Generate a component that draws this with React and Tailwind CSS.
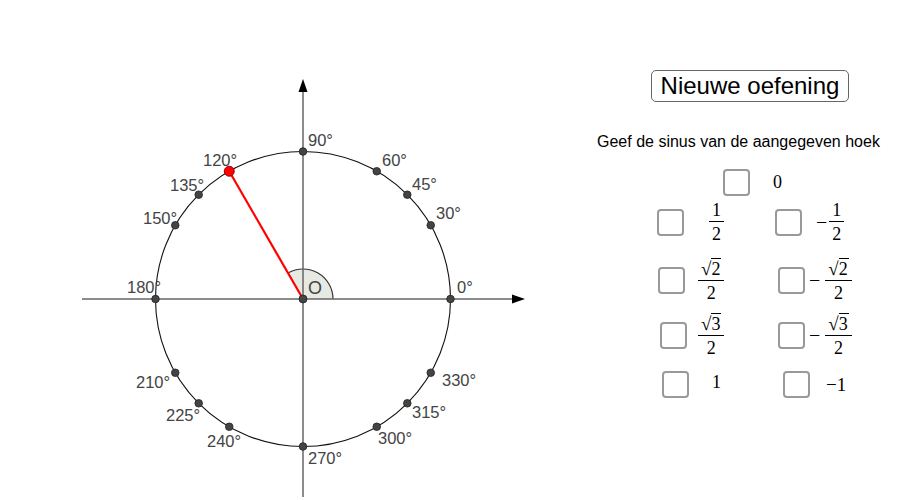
import React from 'react';

const CX = 303;
const CY = 299;
const R = 147.5;

const angles = [0, 30, 45, 60, 90, 135, 150, 180, 210, 225, 240, 270, 300, 315, 330];

const labels = [
  { t: '0°', x: 457, y: 293 },
  { t: '30°', x: 436, y: 219 },
  { t: '45°', x: 412, y: 190 },
  { t: '60°', x: 382, y: 166 },
  { t: '90°', x: 308, y: 146 },
  { t: '120°', x: 203, y: 166 },
  { t: '135°', x: 170, y: 191 },
  { t: '150°', x: 143, y: 224 },
  { t: '180°', x: 127, y: 293 },
  { t: '210°', x: 136, y: 388 },
  { t: '225°', x: 166, y: 421 },
  { t: '240°', x: 207, y: 447 },
  { t: '270°', x: 308, y: 464 },
  { t: '300°', x: 378, y: 444 },
  { t: '315°', x: 412, y: 418 },
  { t: '330°', x: 442, y: 386 },
];

function pt(deg, r = R) {
  const a = (deg * Math.PI) / 180;
  return [CX + r * Math.cos(a), CY - r * Math.sin(a)];
}

function UnitCircle() {
  const [rx, ry] = pt(120);
  const [sx, sy] = pt(120, 30);
  return (
    <svg width="590" height="500" viewBox="0 0 590 500" className="shrink-0">
      <path
        d={`M ${CX} ${CY} L ${CX + 30} ${CY} A 30 30 0 0 0 ${sx} ${sy} Z`}
        fill="#e6eae3"
        stroke="none"
      />
      <path d={`M ${CX + 30} ${CY} A 30 30 0 0 0 ${sx} ${sy}`} fill="none" stroke="#333" strokeWidth="1.2" />
      <line x1="82" y1={CY} x2="514" y2={CY} stroke="#666" strokeWidth="1.5" />
      <polygon points={`512,294.5 525,${CY} 512,303.5`} fill="#000" />
      <line x1={CX} y1="497" x2={CX} y2="90" stroke="#666" strokeWidth="1.5" />
      <polygon points={`298.5,92 ${CX},79 307.5,92`} fill="#000" />
      <circle cx={CX} cy={CY} r={R} fill="none" stroke="#111" strokeWidth="1.1" />
      <line x1={CX} y1={CY} x2={rx} y2={ry} stroke="#ff0000" strokeWidth="2.2" />
      {angles.map((a) => {
        const [x, y] = pt(a);
        return <circle key={a} cx={x} cy={y} r="3.8" fill="#444" stroke="#222" strokeWidth="0.8" />;
      })}
      <circle cx={rx} cy={ry} r="5" fill="#ff0000" stroke="#990000" strokeWidth="1" />
      <circle cx={CX} cy={CY} r="4" fill="#444" stroke="#222" strokeWidth="0.8" />
      <g fontFamily="'Liberation Sans', Arial, sans-serif" fontSize="16.5" fill="#444">
        {labels.map((l) => (
          <text key={l.t} x={l.x} y={l.y}>
            {l.t}
          </text>
        ))}
        <text x="308" y="294" fontSize="18">O</text>
      </g>
    </svg>
  );
}

function Box() {
  return <div className="w-[27px] h-[27px] shrink-0 rounded-[4px] border-2 border-[#999] bg-white" />;
}

function Frac({ num, sqrt }) {
  return (
    <div className="flex flex-col items-center leading-none text-[18px]">
      <div className="flex items-end px-[3px] pb-[2px]">
        {sqrt ? (
          <>
            <span className="text-[19px] leading-none">√</span>
            <span className="border-t border-black leading-none pt-[1px] pr-[1px]">{num}</span>
          </>
        ) : (
          <span>{num}</span>
        )}
      </div>
      <div className="h-px w-full bg-black" />
      <div className="pt-[3px]">2</div>
    </div>
  );
}

function Minus() {
  return <span className="text-[20px] leading-none">−</span>;
}

export default function App() {
  return (
    <div className="w-[900px] h-[500px] bg-white flex overflow-hidden font-['Liberation_Serif',serif] text-black">
      <UnitCircle />
      <div className="flex flex-col pt-[70px]">
        <button className="ml-[61px] w-[198px] h-[32px] rounded-[5px] border-[1.5px] border-[#666] bg-white font-['Liberation_Sans',Arial,sans-serif] text-[24px] leading-none text-black">
          Nieuwe oefening
        </button>
        <div className="ml-[7px] mt-[32px] font-['Liberation_Sans',Arial,sans-serif] text-[16px] leading-none whitespace-nowrap">
          Geef de sinus van de aangegeven hoek
        </div>
        <div className="ml-[133px] mt-[19px] flex items-center">
          <Box />
          <span className="ml-[23px] text-[18px]">0</span>
        </div>
        <div className="mt-[11px] flex items-center h-[30px]">
          <div className="ml-[67px] w-[118px] flex items-center">
            <Box />
            <div className="ml-[25px]"><Frac num="1" /></div>
          </div>
          <Box />
          <div className="ml-[14px] flex items-center gap-[2px]"><Minus /><Frac num="1" /></div>
        </div>
        <div className="mt-[28px] flex items-center h-[30px]">
          <div className="ml-[68px] w-[120px] flex items-center">
            <Box />
            <div className="ml-[13px]"><Frac num="2" sqrt /></div>
          </div>
          <Box />
          <div className="ml-[4px] flex items-center gap-[5px]"><Minus /><Frac num="2" sqrt /></div>
        </div>
        <div className="mt-[25px] flex items-center h-[30px]">
          <div className="ml-[70px] w-[118px] flex items-center">
            <Box />
            <div className="ml-[11px]"><Frac num="3" sqrt /></div>
          </div>
          <Box />
          <div className="ml-[4px] flex items-center gap-[5px]"><Minus /><Frac num="3" sqrt /></div>
        </div>
        <div className="mt-[21px] flex items-start h-[30px]">
          <div className="ml-[72px] w-[121px] flex items-start">
            <Box />
            <span className="ml-[23px] text-[18px] leading-none mt-[2px]">1</span>
          </div>
          <Box />
          <span className="ml-[16px] text-[19px] leading-none mt-[4px]">−1</span>
        </div>
      </div>
    </div>
  );
}
